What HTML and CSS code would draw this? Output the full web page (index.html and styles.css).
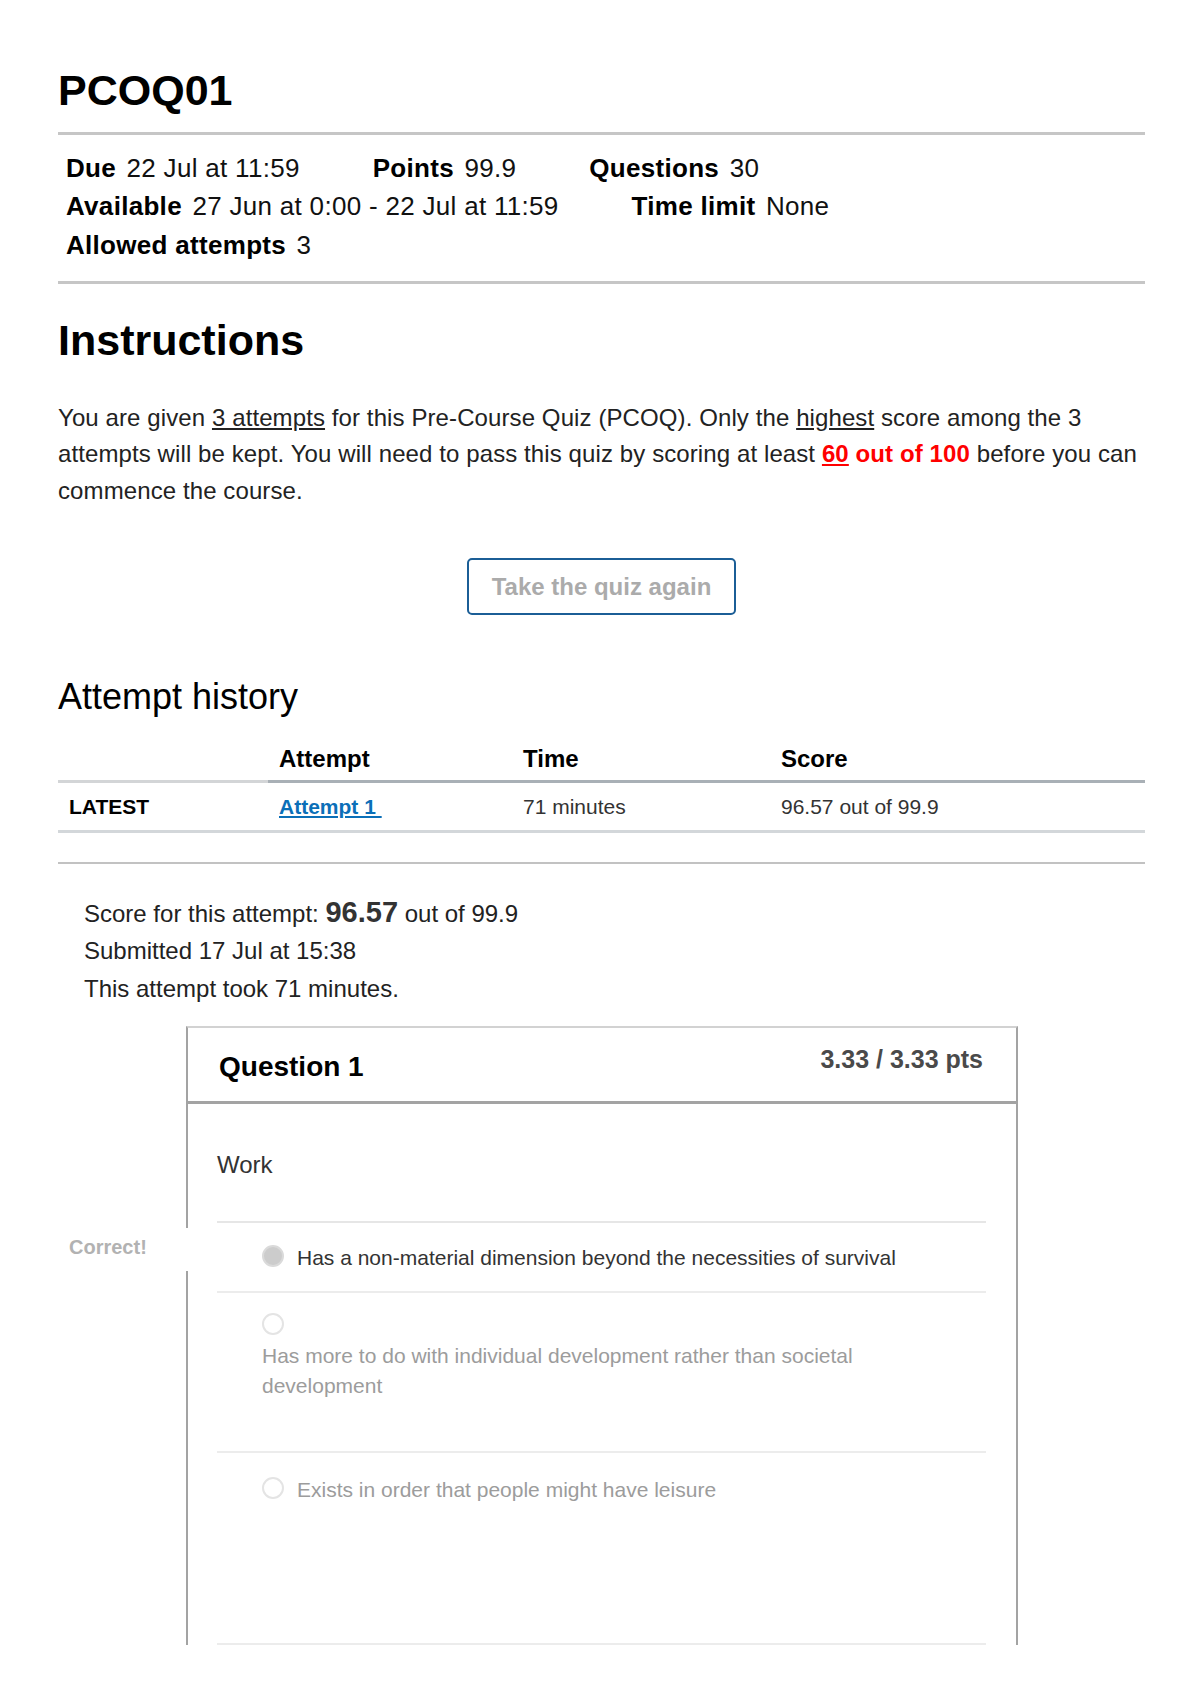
FILE: index.html
```html
<!DOCTYPE html>
<html lang="en">
<head>
    <meta charset="UTF-8">
    <meta name="viewport" content="width=device-width, initial-scale=1.0">
    <title>PCOQ01</title>
    <link rel="stylesheet" href="styles.css">
</head>
<body>
    <div class="page">
        <h1 class="quiz-title">PCOQ01</h1>

        <div class="quiz-details">
            <div class="detail-row">
                <div class="detail"><strong>Due</strong> 22 Jul at 11:59</div>
                <div class="detail"><strong>Points</strong> 99.9</div>
                <div class="detail"><strong>Questions</strong> 30</div>
            </div>
            <div class="detail-row">
                <div class="detail"><strong>Available</strong> 27 Jun at 0:00 - 22 Jul at 11:59</div>
                <div class="detail"><strong>Time limit</strong> None</div>
            </div>
            <div class="detail-row">
                <div class="detail"><strong>Allowed attempts</strong> 3</div>
            </div>
        </div>

        <h2 class="section-title">Instructions</h2>
        <p class="instructions">
            You are given <u>3 attempts</u> for this Pre-Course Quiz (PCOQ). Only the <u>highest</u> score among the 3
            attempts will be kept. You will need to pass this quiz by scoring at least
            <span class="pass-mark"><u>60</u> out of 100</span> before you can commence the course.
        </p>

        <div class="actions">
            <button class="btn-retake">Take the quiz again</button>
        </div>

        <h2 class="history-title">Attempt history</h2>
        <table class="history">
            <thead>
                <tr>
                    <th class="col-label"></th>
                    <th class="col-attempt">Attempt</th>
                    <th class="col-time">Time</th>
                    <th>Score</th>
                </tr>
            </thead>
            <tbody>
                <tr>
                    <td class="latest">LATEST</td>
                    <td><a href="#" class="attempt-link">Attempt 1&nbsp;</a></td>
                    <td>71 minutes</td>
                    <td>96.57 out of 99.9</td>
                </tr>
            </tbody>
        </table>

        <div class="attempt-summary">
            <div>Score for this attempt: <span class="big-score">96.57</span> out of 99.9</div>
            <div>Submitted 17 Jul at 15:38</div>
            <div>This attempt took 71 minutes.</div>
        </div>

        <div class="question">
            <div class="answer-flag">Correct!</div>
            <div class="question-header">
                <h3>Question 1</h3>
                <span class="pts">3.33 / 3.33 pts</span>
            </div>
            <div class="question-body">
                <div class="question-text">Work</div>

                <div class="answer selected">
                    <span class="radio"></span><span class="answer-text">Has a non-material dimension beyond the necessities of survival</span>
                </div>
                <div class="answer answer-mid">
                    <span class="radio"></span><span class="answer-text">Has more to do with individual development rather than societal development</span>
                </div>
                <div class="answer answer-last">
                    <span class="radio"></span><span class="answer-text">Exists in order that people might have leisure</span>
                </div>
            </div>
        </div>
    </div>
</body>
</html>
```

FILE: styles.css
```css
body {
    font-family: 'Liberation Sans', Arial, sans-serif;
    margin: 0;
    padding: 0;
    background: #ffffff;
    color: #222222;
}

.page {
    padding: 0 55px 55px 58px;
}

.quiz-title {
    margin: 65px 0 0;
    font-size: 43px;
    line-height: 50px;
    font-weight: 700;
    color: #000000;
    padding-bottom: 17px;
    border-bottom: 3px solid #c6c6c6;
}

/* details block */
.quiz-details {
    padding: 14px 0 17px 8px;
    border-bottom: 3px solid #c6c6c6;
    font-size: 26px;
    letter-spacing: 0.3px;
    color: #111111;
}

.detail-row {
    display: flex;
    column-gap: 73px;
    height: 38.3px;
    line-height: 38.3px;
}

.detail strong {
    margin-right: 3px;
    color: #000000;
}

.section-title {
    margin: 31px 0 0;
    font-size: 43px;
    line-height: 50px;
    font-weight: 700;
    color: #000000;
}

.instructions {
    margin: 35px 0 0;
    font-size: 24px;
    line-height: 36.6px;
    letter-spacing: 0.1px;
    color: #222222;
}

.pass-mark {
    color: #ff0000;
    font-weight: 700;
}

.actions {
    margin-top: 48px;
    text-align: center;
}

.btn-retake {
    width: 269px;
    height: 57px;
    box-sizing: border-box;
    border: 2px solid #1b5e96;
    border-radius: 5px;
    background: #ffffff;
    color: #ababab;
    font-family: inherit;
    font-size: 24px;
    font-weight: 700;
    line-height: 53px;
    padding: 0;
    cursor: pointer;
}

.history-title {
    margin: 61px 0 0;
    font-size: 36px;
    line-height: 42px;
    font-weight: 400;
    color: #000000;
}

/* attempt history table */
.history {
    width: 100%;
    margin-top: 18px;
    border-collapse: collapse;
    font-size: 21px;
    color: #333333;
}

.history th {
    text-align: left;
    font-size: 24px;
    line-height: 30px;
    padding: 8px 11px 6px;
    color: #000000;
    border-bottom: 3px solid #a9b0b6;
}

.history th.col-label {
    width: 188px;
    border-bottom-color: #d3d5d7;
}

.history th.col-attempt {
    width: 222px;
}

.history th.col-time {
    width: 236px;
}

.history td {
    line-height: 30px;
    padding: 9px 11px 8px;
    border-bottom: 3px solid #d3d7da;
}

.history td.latest {
    font-weight: 700;
    color: #000000;
}

.attempt-link {
    color: #0b6fb8;
    font-weight: 700;
    text-decoration: underline;
}

.attempt-summary {
    margin-top: 29px;
    padding: 31px 0 0 26px;
    border-top: 2px solid #c2c2c2;
    font-size: 24px;
    line-height: 37.5px;
    color: #222222;
}

.big-score {
    font-size: 29px;
    font-weight: 700;
    line-height: 1;
    color: #333333;
}

/* question card */
.question {
    position: relative;
    margin: 19px 127px 0 128px;
    border-top: 2px solid #d2d2d2;
    border-left: 2px solid #a3a3a3;
    border-right: 2px solid #a3a3a3;
}

.answer-flag {
    position: absolute;
    left: -128px;
    top: 200px;
    width: 134px;
    height: 43px;
    padding-left: 9px;
    box-sizing: border-box;
    background: #ffffff;
    color: #b2b2b2;
    font-size: 20px;
    font-weight: 700;
    line-height: 38px;
}

.question-header {
    display: flex;
    justify-content: space-between;
    align-items: flex-start;
    padding: 16px 33px 17px 31px;
    border-bottom: 3px solid #a3a3a3;
}

.question-header h3 {
    margin: 6px 0 0;
    font-size: 28px;
    line-height: 34px;
    color: #000000;
}

.pts {
    font-size: 25px;
    font-weight: 700;
    line-height: 30px;
    color: #4a4a4a;
}

.question-body {
    padding: 0 30px 0 29px;
}

.question-text {
    padding: 43px 0 38px;
    font-size: 24px;
    line-height: 36px;
    color: #333333;
    border-bottom: 2px solid #e6e6e6;
}

.answer {
    padding: 20px 81px 18px 45px;
    font-size: 21px;
    line-height: 30px;
    color: #9c9c9c;
    border-bottom: 2px solid #ececec;
}

.answer.selected {
    color: #333333;
}

.answer-mid {
    padding-top: 18px;
    padding-bottom: 50px;
}

.answer-last {
    padding-top: 22px;
    padding-bottom: 138px;
}

.radio {
    display: inline-block;
    width: 18px;
    height: 18px;
    margin-right: 13px;
    border: 2px solid #e4e4e4;
    border-radius: 50%;
    background: #ffffff;
    vertical-align: -2px;
}

.answer.selected .radio {
    background: #cccccc;
    border-color: #dadada;
}

.answer-text {
    display: inline-block;
    vertical-align: top;
}
```
